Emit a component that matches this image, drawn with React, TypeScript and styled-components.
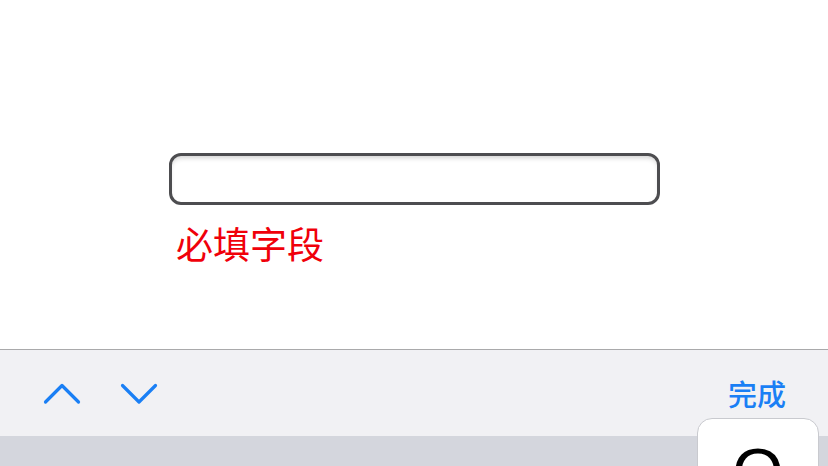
import styled, { createGlobalStyle } from 'styled-components';

const GlobalStyle = createGlobalStyle`
	html, body {
		margin: 0;
		padding: 0;
		background: #ffffff;
	}

	body {
		font-family: "Noto Sans CJK SC", "Noto Sans", sans-serif;
	}
`;

const Screen = styled.div`
	position: relative;
	display: flex;
	flex-direction: column;
	width: 828px;
	height: 466px;
	overflow: hidden;
`;

const Content = styled.main`
	flex: 1;
	display: flex;
	flex-direction: column;
	align-items: flex-start;
	padding: 153px 0 0 169px;
`;

const TextInput = styled.input`
	box-sizing: border-box;
	width: 491px;
	height: 52px;
	margin: 0;
	border: 3px solid #4d4d50;
	border-radius: 12px;
	background: #ffffff;
	box-shadow: inset 0 4px 5px -2px rgba(0, 0, 0, 0.18);
	outline: none;
	padding: 0 12px;
	font-size: 24px;
`;

const ErrorText = styled.p`
	margin: 20px 0 0 7px;
	font-size: 37px;
	line-height: 1;
	font-weight: 400;
	color: #f0000a;
`;

const Toolbar = styled.div`
	display: flex;
	align-items: center;
	justify-content: space-between;
	height: 86px;
	border-top: 1px solid #a9a9ab;
	background: #f1f1f4;
	padding: 0 42px;
`;

const NavGroup = styled.div`
	display: flex;
	align-items: center;
	gap: 37px;
`;

const NavButton = styled.button`
	display: flex;
	align-items: center;
	justify-content: center;
	width: 40px;
	height: 24px;
	padding: 0;
	margin-top: 2px;
	border: none;
	background: transparent;
`;

const DoneButton = styled.button`
	border: none;
	background: transparent;
	padding: 0;
	font-family: "Noto Sans CJK SC", sans-serif;
	font-size: 29px;
	font-weight: 500;
	line-height: 1;
	color: #1a7ff5;
`;

const Keyboard = styled.div`
	height: 30px;
	background: #d4d6dd;
`;

const KeyPopup = styled.div`
	position: absolute;
	left: 697px;
	top: 418px;
	width: 122px;
	height: 80px;
	box-sizing: border-box;
	border: 1px solid #c9cacf;
	border-radius: 15px;
	background: #ffffff;
	display: flex;
	justify-content: center;
	font-family: "Liberation Sans", sans-serif;
	font-size: 66px;
	line-height: 1;
	color: #000000;
	padding-top: 20px;
`;

const Chevron = ({ up }: { up?: boolean }) => (
	<svg width="40" height="24" viewBox="0 0 40 24" fill="none">
		<path
			d={up ? 'M3.5 20 L20 3.5 L36.5 20' : 'M3.5 3.5 L20 20 L36.5 3.5'}
			stroke="#1a7ff5"
			strokeWidth="3.2"
			strokeLinecap="round"
			strokeLinejoin="round"
		/>
	</svg>
);

const App = () => {
	return (
		<>
			<GlobalStyle />
			<Screen>
				<Content>
					<TextInput type="text" aria-label="field" />
					<ErrorText>必填字段</ErrorText>
				</Content>
				<Toolbar>
					<NavGroup>
						<NavButton aria-label="previous">
							<Chevron up />
						</NavButton>
						<NavButton aria-label="next">
							<Chevron />
						</NavButton>
					</NavGroup>
					<DoneButton>完成</DoneButton>
				</Toolbar>
				<Keyboard />
				<KeyPopup>O</KeyPopup>
			</Screen>
		</>
	);
};

export default App;
